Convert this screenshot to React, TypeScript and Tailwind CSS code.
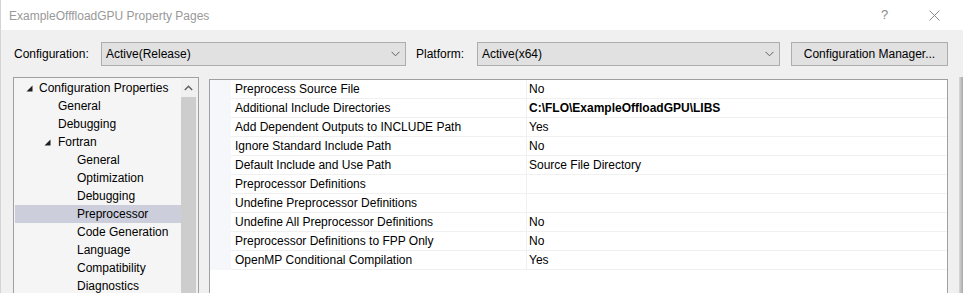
import React from 'react';

const font = { fontFamily: '"Liberation Sans", Arial, sans-serif' };

function Chevron() {
  return (
    <svg width="9" height="6" viewBox="0 0 9 6" className="shrink-0">
      <path d="M0.5 0.8 L4.5 4.8 L8.5 0.8" fill="none" stroke="#606060" strokeWidth="1" />
    </svg>
  );
}

function Combo({ value, width }: { value: string; width: string }) {
  return (
    <div className={`${width} h-[24px] bg-[#e1e1e1] border border-[#adadad] flex items-center justify-between pl-[4px] pr-[5px] text-[12px] text-black`}>
      <span>{value}</span>
      <Chevron />
    </div>
  );
}

function Expander() {
  return (
    <svg width="7" height="7" viewBox="0 0 7 7" className="shrink-0">
      <path d="M6.5 0.5 L6.5 6.5 L0.5 6.5 Z" fill="#1e1e1e" />
    </svg>
  );
}

const tree: { label: string; level: number; expanded?: boolean; selected?: boolean }[] = [
  { label: 'Configuration Properties', level: 0, expanded: true },
  { label: 'General', level: 1 },
  { label: 'Debugging', level: 1 },
  { label: 'Fortran', level: 1, expanded: true },
  { label: 'General', level: 2 },
  { label: 'Optimization', level: 2 },
  { label: 'Debugging', level: 2 },
  { label: 'Preprocessor', level: 2, selected: true },
  { label: 'Code Generation', level: 2 },
  { label: 'Language', level: 2 },
  { label: 'Compatibility', level: 2 },
  { label: 'Diagnostics', level: 2 },
];

const indent = ['pl-[24px]', 'pl-[43px]', 'pl-[62px]'];

const props: [string, string, boolean?][] = [
  ['Preprocess Source File', 'No'],
  ['Additional Include Directories', 'C:\\FLO\\ExampleOffloadGPU\\LIBS', true],
  ['Add Dependent Outputs to INCLUDE Path', 'Yes'],
  ['Ignore Standard Include Path', 'No'],
  ['Default Include and Use Path', 'Source File Directory'],
  ['Preprocessor Definitions', ''],
  ['Undefine Preprocessor Definitions', ''],
  ['Undefine All Preprocessor Definitions', 'No'],
  ['Preprocessor Definitions to FPP Only', 'No'],
  ['OpenMP Conditional Compilation', 'Yes'],
];

export default function App() {
  return (
    <div className="w-[963px] h-[293px] bg-[#f0f0f0] overflow-hidden flex flex-col text-black border-l border-[#d4d4d4]" style={font}>
      {/* Title bar */}
      <div className="h-[30px] bg-white flex items-center justify-between shrink-0">
        <span className="pl-[8px] pt-[1px] text-[12px] text-[#999999]">ExampleOfffloadGPU Property Pages</span>
        <div className="flex items-center">
          <span className="text-[13px] text-[#8a8a8a] w-[14px] mr-[34px]">?</span>
          <svg width="11" height="11" viewBox="0 0 11 11" className="mr-[23px]">
            <path d="M0.5 0.5 L10.5 10.5 M10.5 0.5 L0.5 10.5" stroke="#8a8a8a" strokeWidth="1" />
          </svg>
        </div>
      </div>

      {/* Configuration row */}
      <div className="flex items-center mt-[12px] pl-[13px] text-[12px] shrink-0">
        <span className="w-[87px]">Configuration:</span>
        <Combo value="Active(Release)" width="w-[305px]" />
        <span className="ml-[10px] w-[61px]">Platform:</span>
        <Combo value="Active(x64)" width="w-[303px]" />
        <div className="ml-[11px] w-[157px] h-[24px] bg-[#e1e1e1] border border-[#adadad] flex items-center justify-center">
          Configuration Manager...
        </div>
      </div>

      {/* Panels */}
      <div className="flex mt-[11px] pl-[12px] flex-1 min-h-0">
        {/* Tree */}
        <div className="w-[186px] border-t border-l border-r border-[#a0a0a0] bg-[#f5f5f5] flex pt-[1px] pl-[1px]">
          <div className="flex-1 flex flex-col text-[12px]">
            {tree.map((n, i) => (
              <div
                key={i}
                className={`h-[18px] shrink-0 flex items-center ${indent[n.level]} relative ${n.selected ? 'bg-[#cccedb]' : ''}`}
              >
                {n.expanded && (
                  <span className="absolute top-[6px]" style={{ left: n.level === 0 ? 11 : 29 }}>
                    <Expander />
                  </span>
                )}
                <span>{n.label}</span>
              </div>
            ))}
          </div>
          <div className="w-[17px] flex flex-col bg-[#f0f0f0] border-r-[2px] border-[#f0f0f0]">
            <div className="h-[18px] flex items-center justify-center">
              <svg width="9" height="6" viewBox="0 0 9 6">
                <path d="M0.8 5 L4.5 1.2 L8.2 5" fill="none" stroke="#606060" strokeWidth="1.4" />
              </svg>
            </div>
            <div className="flex-1 bg-[#cdcdcd]" />
          </div>
        </div>

        {/* Property grid */}
        <div className="ml-[10px] w-[739px] border-t border-l border-r border-[#a0a0a0] bg-white mt-[2px]">
          <div className="flex flex-col text-[12px]">
            {props.map(([name, value, bold], i) => (
              <div key={i} className="flex h-[19px] shrink-0">
                <div className="w-[21px] bg-[#f5f7fb]" />
                <div className="w-[296px] flex items-center pl-[4px] border-b border-r border-[#f0f0f0]">{name}</div>
                <div className={`flex-1 flex items-center pl-[2px] border-b border-[#f0f0f0] ${bold ? 'font-bold' : ''}`}>{value}</div>
              </div>
            ))}
          </div>
        </div>
        <div className="flex-1" />
        <div className="w-[4px] bg-gradient-to-r from-[#d8d8d8] to-[#a8a8a8]" />
      </div>
    </div>
  );
}
